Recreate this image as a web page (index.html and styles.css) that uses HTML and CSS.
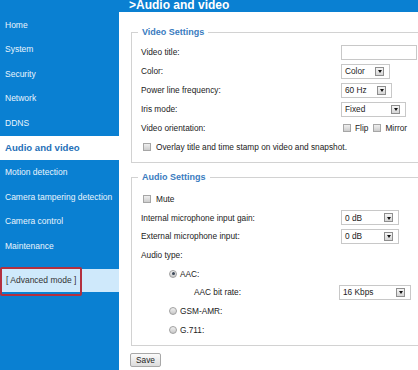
FILE: index.html
```html
<!DOCTYPE html>
<html>
<head>
<meta charset="utf-8">
<link rel="stylesheet" href="styles.css">
</head>
<body>
<div class="page">
  <nav class="side">
    <div class="item">Home</div>
    <div class="item">System</div>
    <div class="item">Security</div>
    <div class="item">Network</div>
    <div class="item">DDNS</div>
    <div class="item active">Audio and video</div>
    <div class="item">Motion detection</div>
    <div class="item">Camera tampering detection</div>
    <div class="item">Camera control</div>
    <div class="item">Maintenance</div>
    <div class="adv"><span>[ Advanced mode ]</span><span class="mark"></span></div>
  </nav>
  <main class="main">
    <div class="title"><span>&gt;Audio and video</span></div>

    <fieldset class="box video">
      <legend>Video Settings</legend>
      <div class="row"><span class="lbl">Video title:</span><span class="input"></span></div>
      <div class="row"><span class="lbl">Color:</span><span class="sel w49"><span>Color</span><span class="btn"></span></span></div>
      <div class="row"><span class="lbl">Power line frequency:</span><span class="sel w51"><span>60 Hz</span><span class="btn"></span></span></div>
      <div class="row"><span class="lbl">Iris mode:</span><span class="sel w65"><span>Fixed</span><span class="btn"></span></span></div>
      <div class="row"><span class="lbl">Video orientation:</span><span class="opts"><span class="cb"></span><span class="optx">Flip</span><span class="cb"></span><span>Mirror</span></span></div>
      <div class="row"><span class="cb first"></span><span>Overlay title and time stamp on video and snapshot.</span></div>
    </fieldset>

    <fieldset class="box audio">
      <legend>Audio Settings</legend>
      <div class="row"><span class="cb first"></span><span>Mute</span></div>
      <div class="row"><span class="lbl">Internal microphone input gain:</span><span class="sel w58"><span>0 dB</span><span class="btn"></span></span></div>
      <div class="row"><span class="lbl">External microphone input:</span><span class="sel w58"><span>0 dB</span><span class="btn"></span></span></div>
      <div class="row"><span>Audio type:</span></div>
      <div class="row"><span class="rd on"></span><span>AAC:</span></div>
      <div class="row"><span class="lbl sub">AAC bit rate:</span><span class="sel w72 shift"><span>16 Kbps</span><span class="btn"></span></span></div>
      <div class="row"><span class="rd"></span><span>GSM-AMR:</span></div>
      <div class="row"><span class="rd"></span><span>G.711:</span></div>
    </fieldset>

    <div class="save">Save</div>
  </main>
</div>
</body>
</html>
```

FILE: styles.css
```css
html, body {
  margin: 0;
  padding: 0;
  background: #fff;
}
body {
  font-family: "Liberation Sans", Arial, sans-serif;
}
.page {
  display: flex;
  width: 418px;
  height: 370px;
  overflow: hidden;
}
.side {
  width: 119px;
  flex: none;
  background: #0a80d2;
  padding-top: 12.7px;
  box-sizing: border-box;
}
.item {
  height: 24.6px;
  line-height: 24.6px;
  padding-left: 5px;
  color: #e9f4fd;
  font-size: 8.5px;
  white-space: nowrap;
}
.item.active {
  background: #fff;
  color: #1f70b8;
  font-weight: bold;
  font-size: 9.6px;
}
.adv {
  position: relative;
  margin-top: 10px;
  height: 23px;
  background: #cfe9fb;
  display: flex;
  align-items: center;
  padding-left: 6px;
  font-size: 8.5px;
  color: #333;
}
.mark {
  position: absolute;
  left: 0;
  top: -2px;
  width: 82px;
  height: 29px;
  border: 2px solid #b3303f;
  border-radius: 2px;
  box-sizing: border-box;
}
.main {
  flex: 1;
  min-width: 0;
  overflow: hidden;
  background: #fff;
  font-size: 8.3px;
  color: #222;
}
.title {
  height: 12px;
  overflow: hidden;
  background: #0a80d2;
  color: #fff;
  font-weight: bold;
  font-size: 12px;
  line-height: 10px;
  padding-left: 10px;
  white-space: nowrap;
}
.box {
  margin: 14.5px 0 0 12px;
  width: 330px;
  min-width: 0;
  border: 1px solid #d2d2d2;
  padding: 5px 0 5.5px 9px;
}
.box.audio {
  margin-top: 8.5px;
  padding-top: 7px;
  padding-bottom: 6px;
}
legend {
  font-weight: bold;
  font-size: 9px;
  line-height: 11px;
  color: #3a7cc0;
  padding: 0 4px;
  margin-left: -3px;
}
.row {
  display: flex;
  align-items: center;
  height: 19px;
  white-space: nowrap;
}
.audio .row {
  height: 18.7px;
}
.lbl {
  width: 200px;
  flex: none;
}
.lbl.sub {
  padding-left: 53px;
  box-sizing: border-box;
}
.input {
  width: 76px;
  height: 15px;
  box-sizing: border-box;
  border: 1px solid #c8c8c8;
  background: #fff;
}
.sel {
  display: flex;
  align-items: center;
  justify-content: space-between;
  height: 15px;
  box-sizing: border-box;
  border: 1px solid #c8c8c8;
  padding: 0 5px 0 3px;
  background: #fff;
}
.sel.shift {
  margin-left: -2px;
}
.w49 { width: 49px; }
.w51 { width: 51px; }
.w65 { width: 65px; }
.w58 { width: 58px; }
.w72 { width: 72px; }
.btn {
  width: 9px;
  height: 9px;
  box-sizing: border-box;
  border: 1px solid #8e8e8e;
  background: linear-gradient(#f6f6f6, #d6d6d6);
  display: flex;
  align-items: center;
  justify-content: center;
}
.btn::after {
  content: "";
  width: 0;
  height: 0;
  border-left: 2.5px solid transparent;
  border-right: 2.5px solid transparent;
  border-top: 3px solid #111;
  margin-top: 1px;
}
.opts {
  display: flex;
  align-items: center;
  padding-left: 2px;
}
.cb {
  width: 8px;
  height: 8px;
  box-sizing: border-box;
  border: 1px solid #a6a6a6;
  background: linear-gradient(#efefef, #cdcdcd);
  margin-right: 4px;
  flex: none;
}
.cb.first {
  margin-left: 2px;
  margin-right: 5px;
}
.optx {
  margin-right: 5px;
}
.rd {
  width: 8px;
  height: 8px;
  box-sizing: border-box;
  border: 1px solid #a0a0a0;
  border-radius: 50%;
  background: linear-gradient(#f0f0f0, #c8c8c8);
  margin-left: 28px;
  margin-right: 3px;
  flex: none;
  display: flex;
  align-items: center;
  justify-content: center;
}
.rd.on::after {
  content: "";
  width: 3px;
  height: 3px;
  border-radius: 50%;
  background: #3a4656;
}
.save {
  margin: 7px 0 0 11px;
  width: 31px;
  height: 14px;
  box-sizing: border-box;
  border: 1px solid #a8a8a8;
  border-radius: 2px;
  background: linear-gradient(#fbfbfb, #dcdcdc);
  font-size: 8.3px;
  line-height: 12px;
  text-align: center;
  color: #222;
}
```
